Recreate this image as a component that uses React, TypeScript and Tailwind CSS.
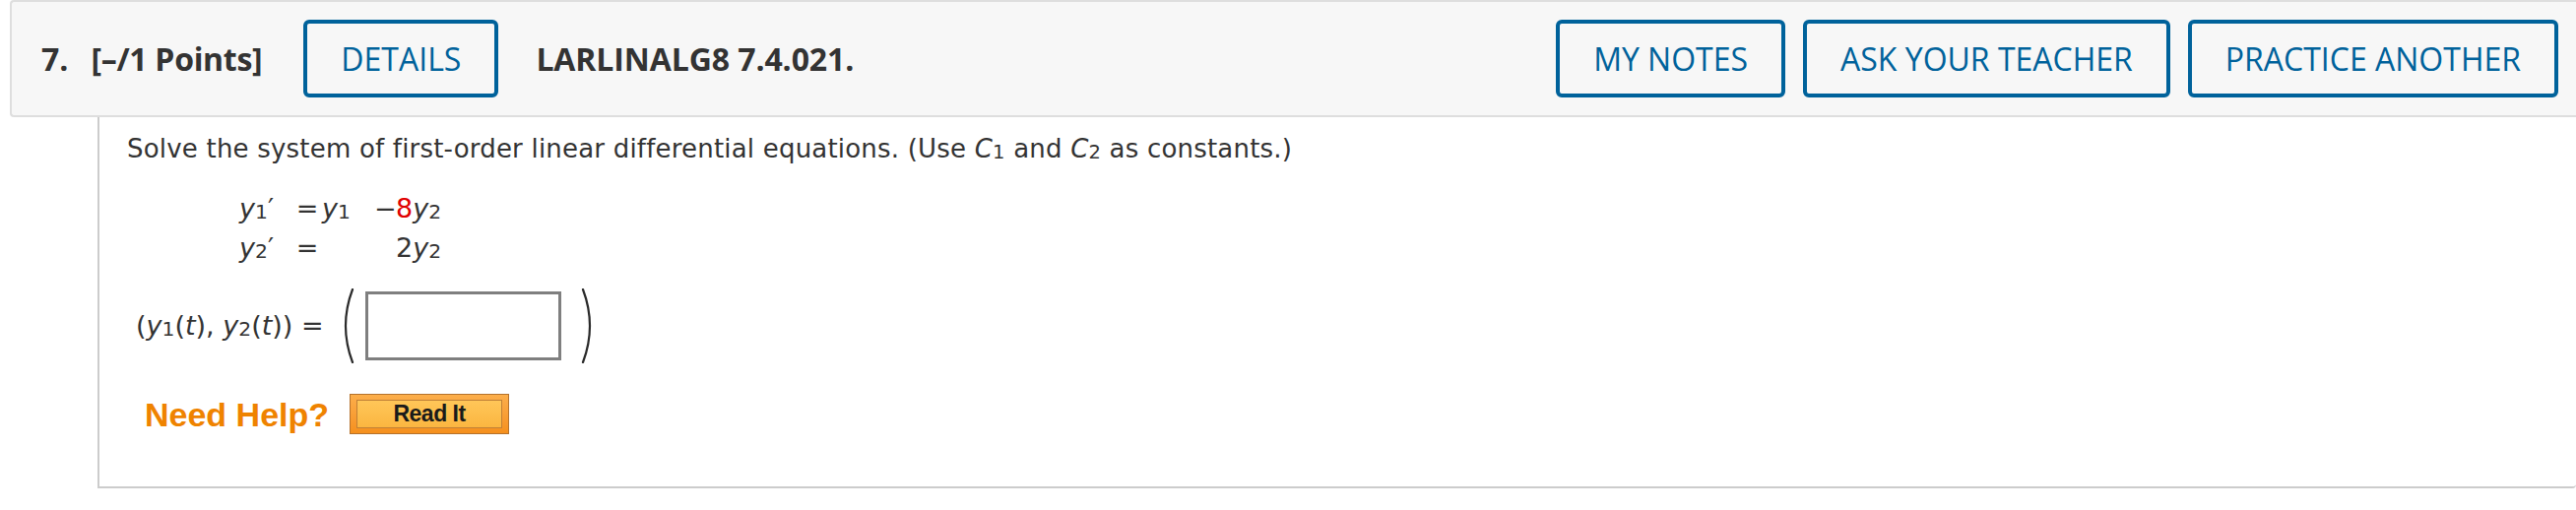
import type { ReactNode } from 'react'

const blue = 'text-[#00629b] border-[#00629b]'

function HeaderButton({ children }: { children: ReactNode }) {
  return (
    <div
      className={`flex h-[79px] items-center rounded-[6px] border-4 px-[34px] text-[32px] leading-none ${blue}`}
    >
      {children}
    </div>
  )
}

function V({ name, sub }: { name: string; sub?: string }) {
  return (
    <span>
      <span className="italic">{name}</span>
      {sub && <sub className="relative -bottom-[1px] text-[0.75em] not-italic">{sub}</sub>}
    </span>
  )
}

function Paren({ right }: { right?: boolean }) {
  return (
    <svg width="19" height="76" viewBox="0 0 19 76" className="shrink-0">
      <path
        d={right ? 'M3 1 Q17 38 3 75' : 'M16 1 Q2 38 16 75'}
        fill="none"
        stroke="#2a2a2a"
        strokeWidth="2.2"
        strokeLinecap="round"
      />
    </svg>
  )
}

function ReadIt() {
  return (
    <div className="ml-[21px] flex h-[41px] w-[162px] items-stretch border border-[#b5722c] bg-gradient-to-b from-[#fcae4a] to-[#f5901c] px-[6px] py-[5px]">
      <div className="flex flex-1 items-center justify-center border border-[#c08036] bg-gradient-to-b from-[#ffc658] to-[#fbb640] font-['Liberation_Sans',Arial,sans-serif] text-[23px] font-bold tracking-[-0.5px] text-[#1a1a1a]">
        Read It
      </div>
    </div>
  )
}

export default function App() {
  return (
    <div className="min-h-[518px] w-[2616px] overflow-hidden bg-white font-['Open_Sans',sans-serif] text-[#333]">
      <div className="ml-[10px] flex h-[119px] items-center rounded-l-[4px] border-2 border-r-0 border-[#dedede] bg-[#f7f7f7] pl-[30px] pr-[18px]">
        <span className="text-[32px] font-bold leading-none">7.</span>
        <span className="ml-[23px] text-[32px] font-bold leading-none tracking-[-0.3px]">[–/1 Points]</span>
        <div className="ml-[42px]">
          <HeaderButton>DETAILS</HeaderButton>
        </div>
        <span className="ml-[38px] text-[32px] font-bold leading-none tracking-[-0.1px]">LARLINALG8 7.4.021.</span>
        <div className="ml-auto flex gap-[18px]">
          <HeaderButton>MY NOTES</HeaderButton>
          <HeaderButton>ASK YOUR TEACHER</HeaderButton>
          <HeaderButton>PRACTICE ANOTHER</HeaderButton>
        </div>
      </div>

      <div className="ml-[99px] rounded-br-[4px] border-b-2 border-l-2 border-[#cccccc] pb-[53px] pl-[28px] pt-[18px] font-['DejaVu_Sans',Verdana,sans-serif]">
        <p className="text-[26px] leading-[29px] tracking-[0.2px]">
          Solve the system of first-order linear differential equations. (Use <V name="C" sub="1" /> and{' '}
          <V name="C" sub="2" /> as constants.)
        </p>

        <div className="ml-[114px] mt-[26px] grid grid-cols-[57px_24px_56px_22px_auto] text-[27px] leading-[40px]">
          <span>
            <V name="y" sub="1" />′
          </span>
          <span className="text-center">=</span>
          <span className="pl-[3px]">
            <V name="y" sub="1" />
          </span>
          <span className="text-center">−</span>
          <span>
            <span className="text-[#e00000]">8</span>
            <V name="y" sub="2" />
          </span>
          <span>
            <V name="y" sub="2" />′
          </span>
          <span className="text-center">=</span>
          <span></span>
          <span></span>
          <span>
            2<V name="y" sub="2" />
          </span>
        </div>

        <div className="ml-[9px] mt-[21px] flex h-[76px] items-center text-[27px]">
          <span className="whitespace-nowrap">
            (<V name="y" sub="1" />(<span className="italic">t</span>), <V name="y" sub="2" />(
            <span className="italic">t</span>)) =
          </span>
          <div className="ml-[13px]">
            <Paren />
          </div>
          <div className="ml-[10px] h-[70px] w-[199px] border-[3px] border-[#7f7f7f] bg-white" />
          <div className="ml-[19px]">
            <Paren right />
          </div>
        </div>

        <div className="ml-[18px] mt-[31px] flex h-[41px] items-center">
          <span className="font-['Liberation_Sans',Arial,sans-serif] text-[34px] font-bold leading-[40px] text-[#ef8300]">
            Need Help?
          </span>
          <ReadIt />
        </div>
      </div>
    </div>
  )
}
